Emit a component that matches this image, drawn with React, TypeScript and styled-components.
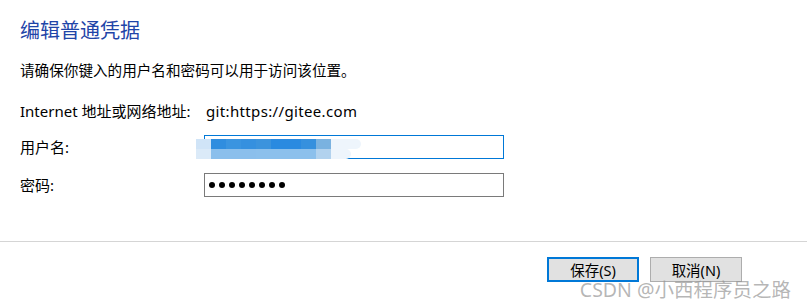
import styled, { createGlobalStyle } from 'styled-components';

const GlobalStyle = createGlobalStyle`
  html, body {
    margin: 0;
    padding: 0;
    background: #ffffff;
  }
  body {
    font-family: "Segoe UI", "Noto Sans", "Noto Sans CJK SC", sans-serif;
    color: #000000;
  }
`;

const Dialog = styled.div`
  position: relative;
  width: 807px;
  height: 306px;
  overflow: hidden;
  background: #ffffff;
  display: flex;
  flex-direction: column;
`;

const Body = styled.div`
  padding: 17px 20px 0 20px;
  display: flex;
  flex-direction: column;
`;

const Title = styled.h1`
  margin: 0;
  font-size: 20px;
  font-weight: 400;
  line-height: 28px;
  color: #1f45a8;
`;

const Instruction = styled.p`
  margin: 15px 0 0 0;
  font-size: 14.6px;
  line-height: 20px;
`;

const Form = styled.div`
  margin-top: 21px;
  display: grid;
  grid-template-columns: 184px 300px;
  row-gap: 14px;
  align-items: center;
`;

const Label = styled.div`
  font-size: 15px;
  line-height: 20px;
  white-space: nowrap;
`;

const Value = styled.div`
  font-size: 15px;
  letter-spacing: 0.35px;
  line-height: 20px;
  padding-left: 2px;
  white-space: nowrap;
`;

const Field = styled.div<{ $focused?: boolean }>`
  position: relative;
  box-sizing: border-box;
  height: 24px;
  border: 1px solid ${p => (p.$focused ? '#0078d7' : '#7a7a7a')};
  background: #ffffff;
  display: flex;
  align-items: center;
  padding-left: 4px;
  gap: 4px;
`;

const Dot = styled.span`
  width: 6px;
  height: 6px;
  border-radius: 50%;
  background: #000000;
`;

const Mosaic = styled.div`
  position: absolute;
  left: -9px;
  top: 3px;
  display: flex;
  flex-direction: column;
`;

const MosaicRow = styled.div`
  display: flex;
  height: 10px;
`;

const Cell = styled.div<{ $w: number; $c: string; $round?: boolean }>`
  width: ${p => p.$w}px;
  height: 100%;
  background: ${p => p.$c};
  border-radius: ${p => (p.$round ? '0 5px 5px 0' : '0')};
`;

const Separator = styled.div`
  margin-top: 44px;
  height: 1px;
  background: #d5d5d5;
`;

const Footer = styled.div`
  display: flex;
  justify-content: flex-end;
  gap: 11px;
  padding: 15px 65px 0 0;
`;

const Button = styled.button<{ $primary?: boolean }>`
  box-sizing: border-box;
  width: 92px;
  height: 25px;
  padding: 0;
  font-family: inherit;
  font-size: 14.5px;
  color: #000000;
  background: #e1e1e1;
  border: ${p => (p.$primary ? '2px solid #0078d7' : '1px solid #adadad')};
  border-radius: 0;
`;

const Watermark = styled.div`
  position: absolute;
  right: 16px;
  bottom: 4px;
  font-size: 19.5px;
  line-height: 24px;
  color: rgba(150, 150, 150, 0.7);
  white-space: nowrap;
  pointer-events: none;
`;

const topCells = [
  { w: 15, c: '#d0e4f7' },
  { w: 15, c: '#2f8ddf' },
  { w: 15, c: '#3a94e0' },
  { w: 15, c: '#3590df' },
  { w: 15, c: '#3b93dd' },
  { w: 15, c: '#2a8ae0' },
  { w: 15, c: '#2a8ae0' },
  { w: 15, c: '#3590de' },
  { w: 15, c: '#7ab2e0' },
  { w: 30, c: '#eef5fc', round: true },
];

const bottomCells = [
  { w: 15, c: '#dbeaf8' },
  { w: 45, c: '#8bbfec' },
  { w: 60, c: '#8cc0ec' },
  { w: 15, c: '#b2d2ee' },
  { w: 20, c: '#eef5fc', round: true },
];

export default function App() {
  return (
    <Dialog>
      <GlobalStyle />
      <Body>
        <Title>编辑普通凭据</Title>
        <Instruction>请确保你键入的用户名和密码可以用于访问该位置。</Instruction>
        <Form>
          <Label>Internet 地址或网络地址:</Label>
          <Value>git:https://gitee.com</Value>
          <Label>用户名:</Label>
          <Field $focused>
            <Mosaic>
              <MosaicRow>
                {topCells.map((c, i) => (
                  <Cell key={i} $w={c.w} $c={c.c} $round={c.round} />
                ))}
              </MosaicRow>
              <MosaicRow>
                {bottomCells.map((c, i) => (
                  <Cell key={i} $w={c.w} $c={c.c} $round={c.round} />
                ))}
              </MosaicRow>
            </Mosaic>
          </Field>
          <Label>密码:</Label>
          <Field>
            {Array.from({ length: 8 }).map((_, i) => (
              <Dot key={i} />
            ))}
          </Field>
        </Form>
      </Body>
      <Separator />
      <Footer>
        <Button $primary>保存(S)</Button>
        <Button>取消(N)</Button>
      </Footer>
      <Watermark>CSDN @小西程序员之路</Watermark>
    </Dialog>
  );
}
